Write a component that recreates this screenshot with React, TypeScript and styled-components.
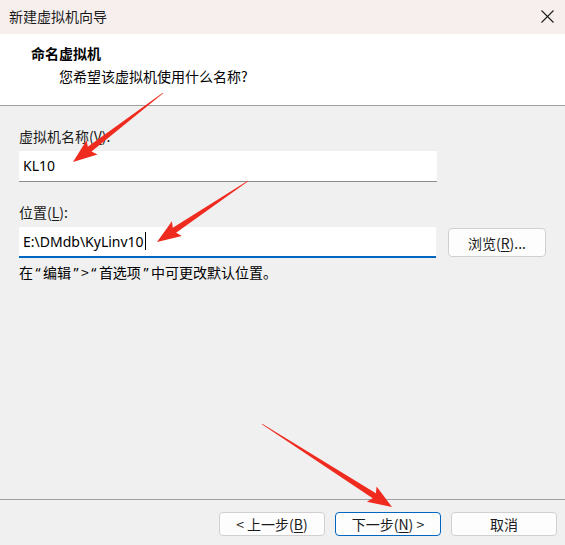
import styled, { createGlobalStyle } from 'styled-components';

const GlobalStyle = createGlobalStyle`
  html, body {
    margin: 0;
    padding: 0;
    background: #f0f0f0;
  }
  body {
    font-family: "Noto Sans CJK SC", "Noto Sans", sans-serif;
    color: #1b1b1b;
  }
`;

type Arrow = { x1: number; y1: number; x2: number; y2: number };

const arrows: Arrow[] = [
  { x1: 163, y1: 93, x2: 73, y2: 162 },
  { x1: 248, y1: 181, x2: 157, y2: 242 },
  { x1: 262, y1: 424, x2: 392, y2: 507 },
];

function arrowPoints(a: Arrow) {
  const dx = a.x2 - a.x1;
  const dy = a.y2 - a.y1;
  const len = Math.hypot(dx, dy);
  const ux = dx / len;
  const uy = dy / len;
  const nx = -uy;
  const ny = ux;
  const head = 21;
  const bx = a.x2 - ux * head;
  const by = a.y2 - uy * head;
  const wx = bx - ux * 3;
  const wy = by - uy * 3;
  const pts = [
    [a.x1 + nx * 0.4, a.y1 + ny * 0.4],
    [bx + nx * 3, by + ny * 3],
    [wx + nx * 9, wy + ny * 9],
    [a.x2, a.y2],
    [wx - nx * 9, wy - ny * 9],
    [bx - nx * 3, by - ny * 3],
    [a.x1 - nx * 0.4, a.y1 - ny * 0.4],
  ];
  return pts.map(p => `${p[0].toFixed(1)},${p[1].toFixed(1)}`).join(' ');
}

function CloseIcon() {
  return (
    <svg width="13" height="13" viewBox="0 0 13 13" fill="none" stroke="#1b1b1b" strokeWidth="1.1">
      <line x1="0.5" y1="0.5" x2="12.5" y2="12.5" />
      <line x1="12.5" y1="0.5" x2="0.5" y2="12.5" />
    </svg>
  );
}

export default function App() {
  return (
    <>
      <GlobalStyle />
      <Window>
        <TitleBar>
          <TitleText>新建虚拟机向导</TitleText>
          <CloseButton>
            <CloseIcon />
          </CloseButton>
        </TitleBar>
        <Header>
          <HeaderTitle>命名虚拟机</HeaderTitle>
          <HeaderSub>您希望该虚拟机使用什么名称?</HeaderSub>
        </Header>
        <Body>
          <Label>
            虚拟机名称(<u>V</u>):
          </Label>
          <FieldRow>
            <Field>KL10</Field>
          </FieldRow>
          <Label $gap>
            位置(<u>L</u>):
          </Label>
          <FieldRow>
            <Field $focused>
              E:\DMdb\KyLinv10
              <Caret />
            </Field>
            <Button $width={98} $height={29}>
              浏览(<u>R</u>)...
            </Button>
          </FieldRow>
          <Hint>
            在<Quote>“</Quote>编辑<Quote>”</Quote>&gt;<Quote>“</Quote>首选项<Quote>”</Quote>中可更改默认位置。
          </Hint>
        </Body>
        <Footer>
          <Button $width={106} $height={24}>
            &lt; 上一步(<u>B</u>)
          </Button>
          <Button $width={106} $height={24} $primary>
            下一步(<u>N</u>) &gt;
          </Button>
          <Button $width={106} $height={24}>
            取消
          </Button>
        </Footer>
        <Annotations width="565" height="545" viewBox="0 0 565 545">
          {arrows.map((a, i) => (
            <polygon key={i} points={arrowPoints(a)} fill="#ef2b1f" />
          ))}
        </Annotations>
      </Window>
    </>
  );
}

const Window = styled.div`
  position: relative;
  width: 565px;
  height: 545px;
  display: flex;
  flex-direction: column;
  background: #f0f0f0;
  overflow: hidden;
`;

const TitleBar = styled.div`
  height: 34px;
  flex: none;
  display: flex;
  align-items: center;
  justify-content: space-between;
  padding: 0 11px 0 9px;
  background: #f6efee;
`;

const TitleText = styled.div`
  font-size: 14px;
  line-height: 20px;
  margin-top: -2px;
`;

const CloseButton = styled.div`
  width: 13px;
  height: 13px;
  display: flex;
  margin-top: -2px;
`;

const Header = styled.div`
  height: 72px;
  flex: none;
  box-sizing: border-box;
  background: #ffffff;
  border-bottom: 1px solid #a0a0a0;
  padding: 9px 0 0 31px;
`;

const HeaderTitle = styled.div`
  font-size: 14px;
  line-height: 20px;
  font-weight: 700;
  color: #000;
`;

const HeaderSub = styled.div`
  font-size: 14px;
  line-height: 20px;
  margin: 3px 0 0 28px;
  color: #000;
`;

const Body = styled.div`
  flex: 1;
  padding: 20px 19px 0;
`;

const Label = styled.div<{ $gap?: boolean }>`
  font-size: 14px;
  line-height: 20px;
  margin-top: ${p => (p.$gap ? '20px' : '0')};

  u {
    text-underline-offset: 2px;
  }
`;

const FieldRow = styled.div`
  display: flex;
  align-items: center;
  gap: 12px;
  margin-top: 5px;
`;

const Field = styled.div<{ $focused?: boolean }>`
  width: 418px;
  height: 31px;
  box-sizing: border-box;
  display: flex;
  align-items: center;
  padding: 0 4px ${p => (p.$focused ? '1px' : '2px')};
  background: #ffffff;
  border-bottom: ${p => (p.$focused ? '2px solid #0067c0' : '1px solid #8a8a8a')};
  font-family: "Noto Sans", sans-serif;
  font-size: 14px;
  color: #000;
`;

const Caret = styled.span`
  display: inline-block;
  width: 1px;
  height: 18px;
  margin-left: 1px;
  background: #000;
`;

const Button = styled.div<{ $width: number; $height: number; $primary?: boolean }>`
  width: ${p => p.$width}px;
  height: ${p => p.$height}px;
  box-sizing: border-box;
  display: flex;
  align-items: center;
  justify-content: center;
  flex: none;
  background: #fdfdfd;
  border: 1px solid ${p => (p.$primary ? '#0067c0' : '#d0d0d0')};
  border-radius: 4px;
  font-size: 14px;
  color: #1b1b1b;
  white-space: pre;

  u {
    text-underline-offset: 2px;
  }
`;

const Hint = styled.div`
  font-size: 14px;
  line-height: 20px;
  margin-top: 4px;
  color: #000;
`;

const Quote = styled.span`
  font-family: "Noto Sans", sans-serif;
  padding: 0 2.5px;
`;

const Footer = styled.div`
  height: 46px;
  flex: none;
  box-sizing: border-box;
  border-top: 1px solid #a0a0a0;
  display: flex;
  justify-content: flex-end;
  gap: 10px;
  padding: 12px 8px 0 0;
`;

const Annotations = styled.svg`
  position: absolute;
  left: 0;
  top: 0;
  pointer-events: none;
`;
